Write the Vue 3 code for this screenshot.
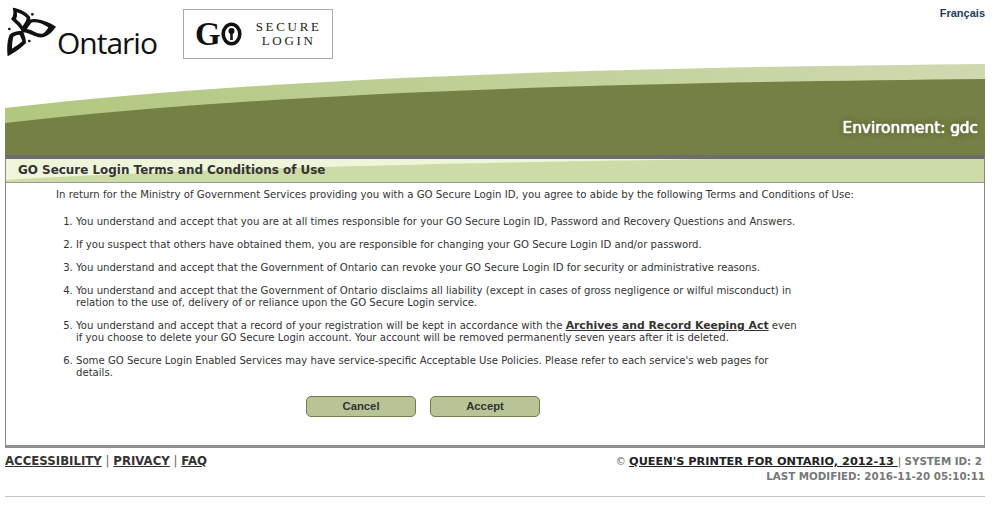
<script setup>
const before = [
  ['You understand and accept that you are at all times responsible for your GO Secure Login ID, Password and Recovery Questions and Answers.'],
  ['If you suspect that others have obtained them, you are responsible for changing your GO Secure Login ID and/or password.'],
  ['You understand and accept that the Government of Ontario can revoke your GO Secure Login ID for security or administrative reasons.'],
  ['You understand and accept that the Government of Ontario disclaims all liability (except in cases of gross negligence or wilful misconduct) in', 'relation to the use of, delivery of or reliance upon the GO Secure Login service.']
]
const after = [
  ['Some GO Secure Login Enabled Services may have service-specific Acceptable Use Policies. Please refer to each service\'s web pages for', 'details.']
]
</script>

<template>
  <div class="page">
    <header class="top">
      <div class="logos">
        <div class="ontario">
          <svg class="trillium" viewBox="15 0 165 165" width="55" height="55">
            <path fill-rule="evenodd" fill="#111" d="M38 8 C55 10 78 18 91 37 C90 52 80 70 67 84 C60 64 44 54 33 42 C41 33 42 22 38 8 Z M50 22 C52 30 51 37 48 42 C55 49 63 54 67 64 C74 55 79 47 80 39 C72 31 62 25 50 22 Z"/>
            <path fill-rule="evenodd" fill="#111" d="M168 65 C145 50 112 36 86 44 C78 56 70 68 65 82 C88 80 108 103 132 96 C148 90 158 79 168 65 Z M145 67 C127 55 108 49 94 53 C89 60 84 66 81 72 C97 74 113 89 128 86 C135 82 141 75 145 67 Z"/>
            <path fill-rule="evenodd" fill="#111" d="M23 154 C20 130 22 102 30 88 C42 79 54 78 69 78 C74 92 78 102 78 114 C66 126 46 142 23 154 Z M36 131 C48 124 59 116 67 109 C65 102 62 95 59 89 C52 89 45 91 40 95 C37 107 36 119 36 131 Z"/>
            <circle cx="97" cy="28" r="4" fill="#111"/>
            <circle cx="28" cy="72" r="4" fill="#111"/>
            <circle cx="88" cy="108" r="4" fill="#111"/>
          </svg>
          <span class="ontario-word">Ontario</span>
        </div>
        <div class="gologo">
          <span class="go">G</span>
          <svg class="keyo" viewBox="0 0 21 24" width="21" height="24">
            <ellipse cx="10.5" cy="12" rx="8.3" ry="9.8" fill="none" stroke="#111" stroke-width="3.6"/>
            <circle cx="10.5" cy="9" r="3" fill="#111"/>
            <rect x="9.2" y="9" width="2.6" height="9" fill="#111"/>
          </svg>
          <span class="secure"><span>SECURE</span><span>LOGIN</span></span>
        </div>
      </div>
      <a class="lang">Français</a>
    </header>

    <div class="banner">
      <svg class="swoosh" viewBox="0 0 980 91" preserveAspectRatio="none">
        <defs>
          <linearGradient id="sw" x1="0" x2="1" y1="0" y2="0">
            <stop offset="0" stop-color="#b1c77f"/>
            <stop offset="1" stop-color="#cfd9b0"/>
          </linearGradient>
        </defs>
        <path d="M0 44 C300 9 693 3 980 0 V70 H0 Z" fill="url(#sw)"/>
        <path d="M0 59 C300 24 693 18 980 15 V91 H0 Z" fill="#748044"/>
      </svg>
      <div class="env">Environment: gdc</div>
    </div>

    <main class="panel">
      <h1 class="title">
        <svg class="title-bg" viewBox="0 0 976 23" preserveAspectRatio="none">
          <path d="M0 0 H712 C500 3 200 9 0 21 Z" fill="#eef5db"/>
        </svg>
        <span>GO Secure Login Terms and Conditions of Use</span>
      </h1>
      <div class="body">
        <p class="intro">In return for the Ministry of Government Services providing you with a GO Secure Login ID, you agree to abide by the following Terms and Conditions of Use:</p>
        <ol class="terms">
          <li v-for="(lines, n) in before" :key="n"><template v-for="(l, i) in lines" :key="i"><br v-if="i">{{ l }}</template></li>
          <li>You understand and accept that a record of your registration will be kept in accordance with the <a class="act">Archives and Record Keeping Act</a> even<br>if you choose to delete your GO Secure Login account. Your account will be removed permanently seven years after it is deleted.</li>
          <li v-for="(lines, n) in after" :key="n"><template v-for="(l, i) in lines" :key="i"><br v-if="i">{{ l }}</template></li>
        </ol>
        <div class="actions">
          <button class="btn" type="button">Cancel</button>
          <button class="btn" type="button">Accept</button>
        </div>
      </div>
    </main>

    <footer class="foot">
      <div class="links"><a>ACCESSIBILITY</a> | <a>PRIVACY</a> | <a>FAQ</a></div>
      <div class="meta">
        <div class="line1"><span class="copy">©</span> <a>QUEEN'S PRINTER FOR ONTARIO, 2012-13 </a> | <span class="sys">SYSTEM ID: 2</span></div>
        <div class="sys">LAST MODIFIED: 2016-11-20 05:10:11</div>
      </div>
    </footer>
    <hr class="rule">
  </div>
</template>

<style>
html, body { margin: 0; background: #fff; }
</style>

<style scoped>
.page { width: 980px; height: 506px; margin-left: 5px; font-family: "DejaVu Sans", Verdana, sans-serif; color: #333; overflow: hidden; }
.top { display: flex; justify-content: space-between; height: 64px; }
.logos { display: flex; align-items: flex-start; }
.ontario { display: flex; align-items: flex-end; width: 178px; height: 60px; }
.ontario-word { margin-left: -3px; font: 30px/34px "Open Sans", sans-serif; letter-spacing: -1px; color: #111; }
.gologo { box-sizing: border-box; width: 150px; height: 50px; margin-top: 9px; border: 1px solid #aaa; display: flex; align-items: center; padding-left: 11px; }
.go { font: bold 33px/1 "Liberation Serif", serif; color: #111; margin-top: 1px; }
.secure { display: flex; flex-direction: column; align-items: center; margin: -1px 0 0 14px; font: 13px/14px "Liberation Serif", serif; letter-spacing: 2.7px; color: #222; }
.lang { font: bold 11px/13px "Liberation Sans", sans-serif; color: #1d3a5f; margin-top: 7px; }
.banner { position: relative; height: 91px; }
.swoosh { display: block; width: 980px; height: 91px; }
.env { position: absolute; right: 7px; top: 54px; font: 15.3px/20px "DejaVu Sans", sans-serif; color: #fff; text-shadow: 0 0 1px #fff, 0 0 1px #fff, 0 0 6px #3d4420; }
.panel { box-sizing: border-box; height: 293px; border: 1px solid #8a8a8a; border-top: 4px solid #6d6d6d; border-bottom: 3px solid #8f8f8f; }
.title { position: relative; margin: 0; height: 23px; background: #cddba6; border-bottom: 1px solid #999; font: bold 11.95px/23px "DejaVu Sans", sans-serif; color: #333; padding-left: 12px; }
.title span { position: relative; }
.title-bg { position: absolute; left: 0; top: 0; width: 100%; height: 100%; }
.body { font-size: 10.12px; line-height: 12px; color: #333; }
.intro { margin: 0; padding: 6px 0 0 50px; font-size: 10.18px; }
.terms { margin: 15px 0 0; padding: 0 0 0 70px; }
.terms li { margin-bottom: 11px; }
.act { font-weight: bold; text-decoration: underline; font-size: 10.85px; line-height: 1; color: #333; }
.actions { display: flex; gap: 14px; margin: 17px 0 0 300px; }
.btn { box-sizing: border-box; width: 110px; height: 21px; padding: 1px 0 0; border: 1px solid #6f7d44; border-radius: 5px; background: #b9c496; font: bold 11.3px/1 "Liberation Sans", sans-serif; color: #333; }
.foot { display: flex; justify-content: space-between; align-items: flex-start; margin-top: 6px; font-size: 11.75px; line-height: 15px; color: #666; }
.links a { font-weight: bold; text-decoration: underline; color: #333; }
.meta { text-align: right; font-size: 10.3px; line-height: 15px; }
.line1 { padding-right: 3px; }
.meta a { font-weight: bold; font-size: 11.3px; text-decoration: underline; color: #222; }
.copy { font-size: 10px; }
.sys { font-weight: bold; color: #777; }
.rule { margin: 12px 0 0; border: 0; border-top: 1px solid #c4c4c4; }
</style>
